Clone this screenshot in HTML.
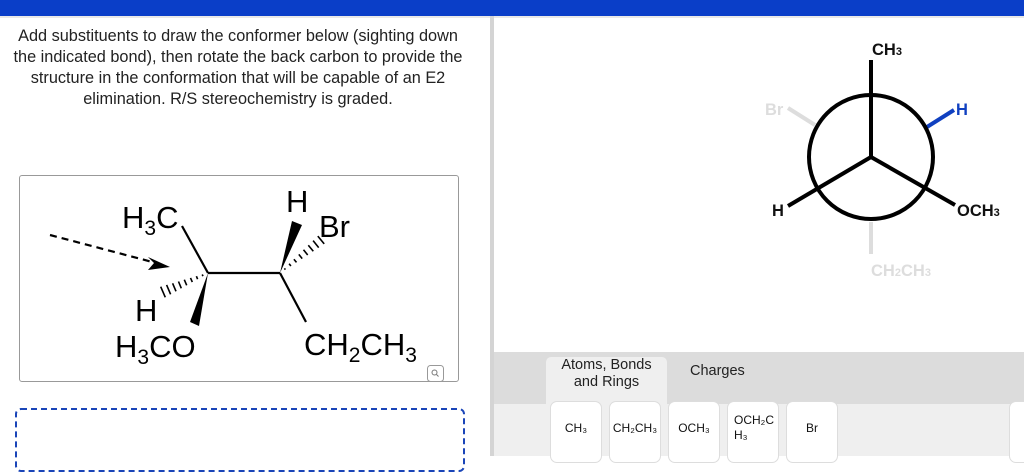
<!DOCTYPE html>
<html><head><meta charset="utf-8"><style>
body{margin:0;width:1024px;height:456px;overflow:hidden;background:#fff;font-family:"Liberation Sans",sans-serif;position:relative}
.abs{position:absolute}
.btn{position:absolute;box-sizing:border-box;top:401px;width:52px;height:62px;background:#fff;border:1px solid #ddd;border-radius:7px;font-size:12px;color:#111;display:flex;align-items:center;justify-content:center;text-align:center;padding-bottom:8px}
</style></head><body>
<div class="abs" style="left:0;top:0;width:1024px;height:16px;background:#0a3ec8"></div>
<div class="abs" style="left:0;top:16px;width:1024px;height:2px;background:#e8e8e8"></div>
<div class="abs" style="left:12px;top:26px;width:452px;text-align:center;font-size:16.3px;line-height:21px;color:#222">Add substituents to draw the conformer below (sighting down the indicated bond), then rotate the back carbon to provide the structure in the conformation that will be capable of an E2 elimination. R/S stereochemistry is graded.</div>
<div class="abs" style="left:490px;top:16px;width:4px;height:440px;background:#d4d4d4"></div>
<div class="abs" style="left:19px;top:175px;width:438px;height:205px;border:1px solid #999;border-radius:3px"></div>
<svg class="abs" style="left:427px;top:365px" width="17" height="17"><rect x="0.5" y="0.5" width="16" height="16" rx="3" fill="#fff" stroke="#999"/><circle cx="7.5" cy="7.5" r="2.5" fill="none" stroke="#777"/><line x1="9.5" y1="9.5" x2="11.5" y2="11.5" stroke="#777"/></svg>
<div class="abs" style="left:15px;top:408px;width:446px;height:60px;border:2px dashed #1a45b8;border-radius:6px"></div>
<svg class="abs" style="left:0;top:0" width="490" height="456">
<g stroke="#000" stroke-width="2.2" fill="none">
<line x1="182" y1="226" x2="208" y2="273"/>
<line x1="208" y1="273" x2="280" y2="273"/>
<line x1="280" y1="273" x2="306" y2="322"/>
<line x1="50" y1="235" x2="160" y2="264" stroke-dasharray="7,5"/>
</g>
<polygon points="170,267 148,257 154,263 148,270" fill="#000"/>
<polygon points="208,273 199,326 190,322" fill="#000"/>
<polygon points="280,273 292,221 302,225" fill="#000"/>
<g stroke="#000" stroke-width="1.6">
<line x1="202.2" y1="274.5" x2="203" y2="276.1"/><line x1="196.4" y1="276.2" x2="197.6" y2="279.2"/><line x1="190.5" y1="277.9" x2="192.3" y2="282.1"/><line x1="184.3" y1="279.7" x2="186.7" y2="285.3"/><line x1="178.5" y1="281.5" x2="181.3" y2="288.3"/><line x1="172.6" y1="283.3" x2="176" y2="291.3"/><line x1="166.6" y1="284.9" x2="170.6" y2="294.3"/><line x1="160.7" y1="286.7" x2="165.3" y2="297.3"/>
<line x1="284.4" y1="268.4" x2="285.4" y2="269.6"/><line x1="289.1" y1="263.8" x2="290.9" y2="266"/><line x1="293.9" y1="259.2" x2="296.5" y2="262.4"/><line x1="298.8" y1="254.4" x2="302.2" y2="258.6"/><line x1="303.5" y1="249.8" x2="307.7" y2="255"/><line x1="308.3" y1="245.3" x2="313.3" y2="251.3"/><line x1="313.1" y1="240.6" x2="318.7" y2="247.6"/><line x1="317.8" y1="236.1" x2="324.2" y2="243.9"/>
</g>
<g font-family="Liberation Sans" font-size="31" fill="#000">
<text x="122" y="228">H<tspan font-size="21" dy="7">3</tspan><tspan dy="-7">C</tspan></text>
<text x="286" y="212">H</text>
<text x="319" y="237">Br</text>
<text x="135" y="321">H</text>
<text x="115" y="357">H<tspan font-size="21" dy="7">3</tspan><tspan dy="-7">CO</tspan></text>
<text x="304" y="355">CH<tspan font-size="21" dy="7">2</tspan><tspan dy="-7">CH</tspan><tspan font-size="21" dy="7">3</tspan></text>
</g>
</svg>
<svg class="abs" style="left:740px;top:20px" width="284" height="270">
<g stroke-width="4" fill="none" stroke-linecap="butt">
<line x1="48" y1="88" x2="75" y2="105" stroke="#ddd"/>
<line x1="131" y1="202" x2="131" y2="234" stroke="#ddd"/>
<line x1="187" y1="107" x2="214" y2="90" stroke="#1040c0"/>
<circle cx="131" cy="137" r="62" stroke="#000"/>
<line x1="131" y1="40" x2="131" y2="137" stroke="#000"/>
<line x1="131" y1="137" x2="48" y2="186" stroke="#000"/>
<line x1="131" y1="137" x2="215" y2="185" stroke="#000"/>
</g>
<g font-family="Liberation Sans" font-weight="bold" font-size="16.5">
<text x="132" y="35" fill="#111">CH<tspan font-size="11">3</tspan></text>
<text x="216" y="95" fill="#1040c0">H</text>
<text x="217" y="196" fill="#111">OCH<tspan font-size="11">3</tspan></text>
<text x="32" y="196" fill="#111">H</text>
<text x="25" y="95" fill="#ddd">Br</text>
<text x="131" y="256" fill="#ddd">CH<tspan font-size="11">2</tspan>CH<tspan font-size="11">3</tspan></text>
</g>
</svg>
<div class="abs" style="left:494px;top:352px;width:530px;height:52px;background:#dcdcdc"></div>
<div class="abs" style="left:546px;top:357px;width:121px;height:47px;background:#efefef;border-radius:5px 5px 0 0;font-size:14.5px;line-height:17px;text-align:center;color:#222">Atoms, Bonds<br>and Rings</div>
<div class="abs" style="left:690px;top:363px;font-size:14.5px;color:#222">Charges</div>
<div class="abs" style="left:494px;top:404px;width:530px;height:52px;background:#efefef"></div>
<div class="btn" style="left:550px">CH₃</div>
<div class="btn" style="left:609px">CH₂CH₃</div>
<div class="btn" style="left:668px">OCH₃</div>
<div class="btn" style="left:727px;text-align:left;justify-content:flex-start;padding-left:6px;line-height:15px">OCH₂C<br>H₃</div>
<div class="btn" style="left:786px">Br</div>
<div class="btn" style="left:1009px;color:#aaa;padding-top:14px">U</div>
</body></html>
